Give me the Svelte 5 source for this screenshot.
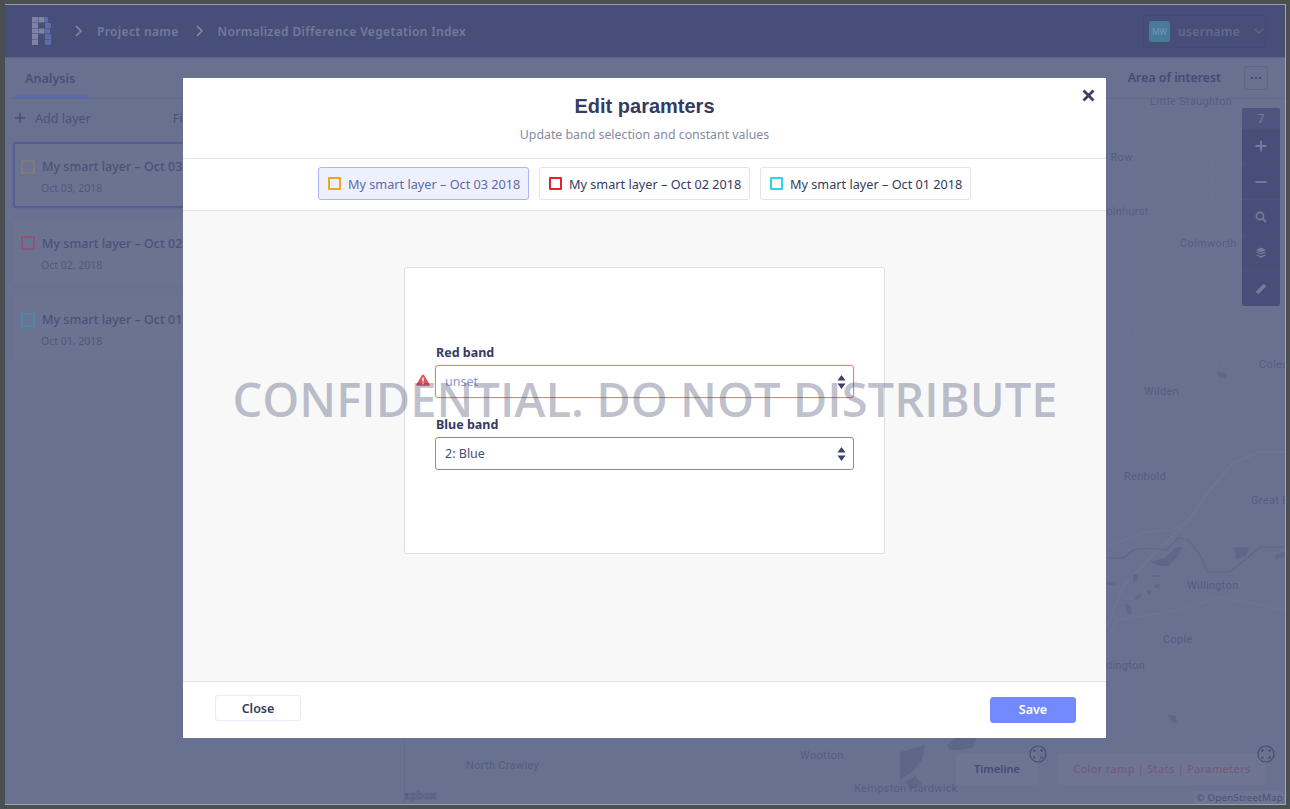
<script>
	const layers = [
		{ name: 'My smart layer – Oct 03 2018', short: 'My smart layer – Oct 03', date: 'Oct 03, 2018', color: '#e9a820', dim: '#7f7a7c', active: true },
		{ name: 'My smart layer – Oct 02 2018', short: 'My smart layer – Oct 02', date: 'Oct 02, 2018', color: '#e8202c', dim: '#8f5378' },
		{ name: 'My smart layer – Oct 01 2018', short: 'My smart layer – Oct 01', date: 'Oct 01, 2018', color: '#2fd3ea', dim: '#4f86ab' }
	];

	const places = [
		['Little Staughton', 1150, 95], ['ne Row', 1095, 151], ['Bolnhurst', 1099, 205], ['Colmworth', 1180, 237],
		['Coles', 1259, 358], ['Wilden', 1144, 385], ['Renhold', 1124, 470], ['Great B', 1251, 494],
		['Willington', 1187, 579], ['Cople', 1163, 633], ['dington', 1106, 659], ['North Crawley', 466, 759],
		['Wootton', 800, 749], ['Kempston Hardwick', 854, 782]
	];

	const water = [
		'1150,562 1165,558 1175,548 1182,547 1178,556 1168,566 1160,566',
		'1234,547 1250,547 1246,556 1236,559',
		'1125,603 1131,606 1132,614 1127,614',
		'1133,574 1138,574 1137,581 1133,581',
		'1107,582 1116,582 1114,585 1107,585',
		'1147,590 1152,591 1150,595 1147,593',
		'1154,585 1160,584 1159,589 1155,587',
		'1152,575 1160,575 1159,577 1152,577',
		'1135,597 1142,593 1140,598 1136,601',
		'1275,555 1285,552 1285,557 1276,559',
		'1217,372 1226,373 1227,378 1218,377',
		'1167,714 1176,716 1177,723 1172,722',
		'900,752 915,748 925,745 922,760 912,772 900,780',
		'947,745 955,738 977,738 972,748 960,750 950,750',
		'905,782 915,776 922,784 910,790'
	];
</script>

<div class="frame">
	<div class="window">
		<header class="topbar">
			<svg class="logo" width="20" height="28" viewBox="0 0 20 28">
				<g fill="#7d84a3">
					<rect x="0" y="0" width="6" height="5.5" /><rect x="6.5" y="0" width="6" height="5.5" />
					<rect x="0" y="6" width="6" height="5" /><rect x="0" y="11.5" width="6" height="5" />
					<rect x="6.5" y="11.5" width="6" height="5" /><rect x="0" y="17" width="6" height="5" />
					<rect x="0" y="22.5" width="6" height="5.5" />
				</g>
				<g fill="#5d6ca8">
					<rect x="13" y="0" width="3" height="5.5" /><path d="M13 6h6v5h-6z" />
					<path d="M13 11.5h5v5h-5z" /><rect x="13" y="17" width="6" height="5" /><rect x="13" y="22.5" width="6" height="5.5" />
				</g>
			</svg>
			<svg class="chev" width="10" height="14" viewBox="0 0 10 14"><path d="M2 2l5 5-5 5" /></svg>
			<span class="crumb">Project name</span>
			<svg class="chev" width="10" height="14" viewBox="0 0 10 14"><path d="M2 2l5 5-5 5" /></svg>
			<span class="crumb">Normalized Difference Vegetation Index</span>
			<div class="user">
				<span class="avatar">MW</span>
				<span class="uname">username</span>
				<svg width="10" height="7" viewBox="0 0 10 7"><path d="M1 1l4 4 4-4" fill="none" stroke="#5f6789" stroke-width="1.4" /></svg>
			</div>
		</header>

		<div class="main">
			<aside class="side">
				<div class="tabs"><span class="tab">Analysis</span></div>
				<div class="add">
					<svg class="plus" width="10" height="10" viewBox="0 0 10 10"><path d="M5 0v10M0 5h10" stroke="#484f79" stroke-width="1.5" /></svg>
					<span>Add layer</span><span class="fi">Fi</span>
				</div>
				{#each layers as l}
					<div class="layer" class:active={l.active}>
						<div class="layer-title">
							<span class="box" style="border-color: {l.dim}"></span>
							<span>{l.short}</span>
						</div>
						<div class="layer-date">{l.date}</div>
					</div>
				{/each}
			</aside>

			<section class="map">
				<div class="mapbar">
					<span class="aoi">Area of interest</span>
					<span class="dots">
						<svg width="12" height="4" viewBox="0 0 12 4"><circle cx="2" cy="2" r="1.2" /><circle cx="6" cy="2" r="1.2" /><circle cx="10" cy="2" r="1.2" /></svg>
					</span>
				</div>
				<div class="tools">
					<div class="zoomval">7</div>
					<div class="tool">
						<svg width="14" height="14" viewBox="0 0 14 14"><path d="M7 1.5v11M1.5 7h11" stroke="#757d9c" stroke-width="1.8" /></svg>
					</div>
					<div class="tool">
						<svg width="14" height="14" viewBox="0 0 14 14"><path d="M1.5 7h11" stroke="#757d9c" stroke-width="1.8" /></svg>
					</div>
					<div class="tool">
						<svg width="12" height="12" viewBox="0 0 12 12"><circle cx="5" cy="5" r="3.6" fill="none" stroke="#757d9c" stroke-width="1.6" /><path d="M7.6 7.6L11 11" stroke="#757d9c" stroke-width="1.8" /></svg>
					</div>
					<div class="tool">
						<svg width="12" height="12" viewBox="0 0 12 12" fill="#757d9c"><path d="M6 .5l5 2.4-5 2.4-5-2.4zM1 5.2l1.2-.6L6 6.4l3.8-1.8 1.2.6-5 2.4zM1 8l1.2-.6L6 9.2l3.8-1.8L11 8l-5 2.9z" /></svg>
					</div>
					<div class="tool">
						<svg width="12" height="12" viewBox="0 0 12 12" fill="#757d9c"><path d="M8.8.8l2.4 2.4-8 8-2.4-2.4z" /></svg>
					</div>
				</div>
				<div class="bottom-btns">
					<div class="pill timeline">Timeline
						<svg class="expand" width="18" height="18" viewBox="0 0 18 18" fill="none" stroke="#454c76"><circle cx="9" cy="9" r="8" stroke-width="1.2" /><path d="M5 7V5h2M11 5h2v2M13 11v2h-2M7 13H5v-2" stroke-width="1.2" /></svg>
					</div>
					<div class="pill ramp">Color ramp | Stats | Parameters
						<svg class="expand" width="18" height="18" viewBox="0 0 18 18" fill="none" stroke="#454c76"><circle cx="9" cy="9" r="8" stroke-width="1.2" /><path d="M5 7V5h2M11 5h2v2M13 11v2h-2M7 13H5v-2" stroke-width="1.2" /></svg>
					</div>
				</div>
				<span class="mapbox">mapbox</span>
				<span class="osm">© OpenStreetMap</span>
			</section>
		</div>

		<svg class="roads" width="1280" height="799" viewBox="5 5 1280 799" fill="none">
			<path d="M1107 627L1123 587 1150 558 1187 522 1210 490 1233 463 1260 452 1285 452" stroke="#6d7593" stroke-width="2" stroke-linejoin="round" />
			<path d="M1107 547L1143 532 1173 530 1187 522" stroke="#6d7593" stroke-width="1.5" />
			<path d="M1107 637L1117 620 1180 610 1220 597 1250 603 1285 610" stroke="#6d7593" stroke-width="1.5" />
			<path d="M1107 558L1123 558 1133 550 1150 548 1167 550 1178 538 1188 540 1200 555 1207 572 1230 572 1247 558 1260 547 1285 547" stroke="#5f6789" stroke-width="1.2" />
			<path d="M1150 112L1180 100M1200 108C1220 160 1215 230 1190 290M1130 200C1140 250 1130 300 1128 340" stroke="#6c7492" stroke-width="1" />
			<path d="M1215 345L1218 380 1180 385 1170 410M1107 470L1170 500 1185 540" stroke="#6c7492" stroke-width="1" />
			<path d="M980 740L1000 790M1020 745L1070 800" stroke="#6c7492" stroke-width="1" />
			{#each water as w}
				<polygon points={w} fill="#5f6789" />
			{/each}
		</svg>

		{#each places as p}
			<span class="place" style="left: {p[1] - 5}px; top: {p[2] - 5}px">{p[0]}</span>
		{/each}
	</div>

	<div class="modal">
		<button class="x" aria-label="Close">
			<svg width="13" height="13" viewBox="0 0 13 13"><path d="M1.5 1.5l10 10M11.5 1.5l-10 10" stroke="#3a4068" stroke-width="2.8" /></svg>
		</button>
		<div class="modal-head">
			<h2>Edit paramters</h2>
			<p>Update band selection and constant values</p>
		</div>
		<div class="modal-tabs">
			{#each layers as l}
				<div class="mtab" class:on={l.active}>
					<span class="mbox" style="border-color: {l.color}"></span>
					<span>{l.name}</span>
				</div>
			{/each}
		</div>
		<div class="modal-body">
			<div class="card">
				<div class="field">
					<div class="label">Red band</div>
					<div class="dropdown bad">
						<svg class="warn" width="14" height="12" viewBox="0 0 14 12">
							<path d="M7 .5c.5 0 .8.3 1 .6l5.6 9.2c.4.7 0 1.4-.8 1.4H1.200c-.8 0-1.200-.7-.8-1.400L6 1.100c.2-.3.5-.6 1-.6z" fill="#e0555c" />
							<path d="M7 3.500v4M7 8.800v1.400" stroke="#fff" stroke-width="1.500" />
						</svg>
						<span class="unset">unset</span>
						<svg class="updown" width="9" height="14" viewBox="0 0 9 14"><path d="M4.500 0l4 5.500h-8zM4.500 14l-4-5.500h8z" /></svg>
					</div>
				</div>
				<div class="field">
					<div class="label">Blue band</div>
					<div class="dropdown">
						<span>2: Blue</span>
						<svg class="updown" width="9" height="14" viewBox="0 0 9 14"><path d="M4.500 0l4 5.500h-8zM4.500 14l-4-5.500h8z" /></svg>
					</div>
				</div>
			</div>
		</div>
		<div class="modal-foot">
			<button class="btn close">Close</button>
			<button class="btn save">Save</button>
		</div>
	</div>

	<div class="watermark">CONFIDENTIAL. DO NOT DISTRIBUTE</div>
</div>

<style>
	:global(body) {
		margin: 0;
		background: #4b4f51;
		font-family: 'Noto Sans', 'Open Sans', sans-serif;
	}

	.frame {
		position: relative;
		width: 1290px;
		height: 809px;
		padding: 4px 4px 4px 5px;
		box-sizing: border-box;
		overflow: hidden;
	}

	.window {
		position: relative;
		height: 100%;
		display: flex;
		flex-direction: column;
		background: #697190;
		border-top: 1px solid #9a9da8;
		border-bottom: 1px solid #a4a6a8;
		border-right: 1px solid #a4a6a8;
		box-sizing: border-box;
		overflow: hidden;
	}

	.topbar {
		height: 52px;
		flex: none;
		display: flex;
		align-items: center;
		background: #474f79;
		padding-left: 27px;
		color: #727a9b;
		border-bottom: 1px solid #5a628a;
		box-sizing: content-box;
	}

	.logo {
		margin-right: 22px;
		margin-top: -1px;
	}

	.chev {
		margin-right: 13px;
	}

	.chev path {
		fill: none;
		stroke: #8087a5;
		stroke-width: 1.6;
	}

	.crumb {
		font-size: 12px;
		font-weight: 600;
		margin-right: 16px;
		letter-spacing: 0.35px;
	}

	.user {
		margin-left: auto;
		margin-right: 19px;
		width: 123px;
		height: 33px;
		box-sizing: border-box;
		display: flex;
		align-items: center;
		gap: 8px;
		padding-left: 5px;
		border: 1px solid #434a74;
		color: #626a8e;
		font-size: 12px;
		font-weight: 600;
		letter-spacing: 0.4px;
	}

	.uname {
		width: 68px;
	}

	.avatar {
		width: 21px;
		height: 21px;
		border-radius: 3px;
		background: #4a7a9b;
		color: #6f9bb4;
		font-size: 8px;
		font-weight: 400;
		letter-spacing: 0;
		display: flex;
		align-items: center;
		justify-content: center;
	}

	.main {
		flex: 1;
		display: flex;
		min-height: 0;
	}

	.side {
		width: 400px;
		flex: none;
		color: #484f79;
		border-right: 1px solid #636b8b;
		box-sizing: border-box;
	}

	.tabs {
		height: 41px;
		margin-right: -1px;
		background: #697190;
		border-bottom: 1px solid #636b8b;
		box-sizing: border-box;
		padding-left: 8px;
	}

	.tab {
		display: inline-block;
		width: 76px;
		height: 40px;
		box-sizing: border-box;
		padding: 12px 0 0 12px;
		font-size: 12.6px;
		font-weight: 600;
		border-bottom: 3px solid #5a6cab;
	}

	.add {
		display: flex;
		align-items: center;
		height: 38px;
		font-size: 12.6px;
		padding-left: 10px;
		margin-bottom: 5px;
		color: #4b527b;
	}

	.plus {
		margin-right: 10px;
	}

	.fi {
		margin-left: 82px;
	}

	.layer {
		height: 66px;
		margin: 0 0 10.5px 8px;
		width: 392px;
		padding: 16px 0 0 9px;
		box-sizing: border-box;
		background: #6b7391;
		border-radius: 3px;
		box-shadow: 0 0 1px #656d8d;
	}

	.layer.active {
		border: 2px solid #575f92;
		padding: 14px 0 0 7px;
		box-shadow: 0 0 2px #596194;
	}

	.layer-title {
		display: flex;
		align-items: center;
		gap: 7px;
		margin-left: -1px;
		font-size: 12.5px;
		font-weight: 500;
		color: #4a517b;
		white-space: nowrap;
	}

	.box {
		width: 10px;
		height: 10px;
		border: 2px solid;
		border-radius: 1px;
		flex: none;
	}

	.layer-date {
		font-size: 10.5px;
		color: #50587f;
		margin: 6px 0 0 19px;
	}

	.map {
		position: relative;
		flex: 1;
		overflow: hidden;
	}

	.mapbar {
		height: 41px;
		display: flex;
		align-items: center;
		justify-content: flex-end;
		border-bottom: 1px solid #636b8b;
		box-sizing: border-box;
		padding: 0 17px 1px 0;
		gap: 23px;
		color: #444b76;
		font-size: 12.3px;
		font-weight: 600;
	}

	.dots {
		width: 22px;
		height: 22px;
		border: 1px solid #5d6589;
		border-radius: 3px;
		display: flex;
		align-items: center;
		justify-content: center;
		fill: #444b76;
	}

	.tools {
		position: absolute;
		top: 50px;
		right: 5px;
		width: 38px;
		background: #474f79;
		border-radius: 3px;
		z-index: 2;
	}

	.zoomval {
		height: 20px;
		line-height: 20px;
		text-align: center;
		color: #757d9c;
		font-size: 13px;
		background: #4e5680;
		border-radius: 3px 3px 0 0;
	}

	.tool {
		height: 35.6px;
		display: flex;
		align-items: center;
		justify-content: center;
		border-top: 1px solid #4b5379;
		box-sizing: border-box;
	}

	.bottom-btns {
		position: absolute;
		right: 19px;
		bottom: 19px;
		display: flex;
		gap: 20px;
		z-index: 2;
		font-size: 11px;
		font-weight: 600;
	}

	.pill {
		position: relative;
		height: 32px;
		line-height: 32px;
		text-align: center;
		background: #6d7593;
		border-radius: 3px;
	}

	.timeline {
		width: 82px;
		color: #444b76;
	}

	.ramp {
		width: 208px;
		color: #775a7e;
		letter-spacing: 0.25px;
		font-weight: 500;
	}

	.expand {
		position: absolute;
		top: -8px;
		right: -9px;
	}

	.mapbox {
		position: absolute;
		left: -11px;
		bottom: 3px;
		font: 700 11px 'Liberation Sans', sans-serif;
		color: #6f7795;
		-webkit-text-stroke: 0.6px #4f577e;
	}

	.osm {
		position: absolute;
		right: 2px;
		bottom: 0;
		font-size: 9.8px;
		color: #4a517a;
		letter-spacing: 0.2px;
		background: #6d7593;
		padding-left: 2px;
	}

	.roads {
		position: absolute;
		left: 0;
		top: 0;
		pointer-events: none;
	}

	.place {
		position: absolute;
		font: 11px Roboto, sans-serif;
		color: #555d83;
		letter-spacing: 0.3px;
		white-space: nowrap;
	}

	.modal {
		position: absolute;
		left: 183px;
		top: 78px;
		width: 923px;
		height: 660px;
		background: #fff;
		display: flex;
		flex-direction: column;
		z-index: 5;
	}

	.x {
		position: absolute;
		top: 11px;
		right: 11px;
		width: 13px;
		height: 13px;
		padding: 0;
		border: 0;
		background: none;
		line-height: 0;
	}

	.modal-head {
		height: 80px;
		flex: none;
		text-align: center;
		box-sizing: border-box;
		padding-top: 16px;
	}

	h2 {
		margin: 0;
		font: 700 20px/24px 'Liberation Sans', sans-serif;
		color: #353b62;
	}

	.modal-head p {
		margin: 8px 0 0;
		font-size: 12.35px;
		line-height: 18px;
		color: #868ba0;
	}

	.modal-tabs {
		height: 53px;
		flex: none;
		display: flex;
		align-items: center;
		justify-content: center;
		gap: 10px;
		box-sizing: border-box;
		padding-bottom: 2px;
		border-top: 1px solid #e4e4e6;
		border-bottom: 1px solid #e4e4e6;
	}

	.mtab {
		width: 211px;
		height: 33px;
		box-sizing: border-box;
		display: flex;
		align-items: center;
		gap: 7px;
		padding-left: 9px;
		border: 1px solid #e2e3e8;
		border-radius: 3px;
		font-size: 12.7px;
		color: #353b62;
		white-space: nowrap;
	}

	.mtab.on {
		background: #eef0fd;
		border-color: #a9b6fb;
		color: #5d69a8;
	}

	.mbox {
		width: 9px;
		height: 9px;
		border: 2px solid;
		border-radius: 1px;
		flex: none;
	}

	.modal-body {
		flex: 1;
		background: #f8f8f8;
		display: flex;
		justify-content: center;
		padding-top: 56px;
	}

	.card {
		width: 481px;
		height: 287px;
		box-sizing: border-box;
		background: #fff;
		border: 1px solid #dedfe3;
		border-radius: 3px;
		padding: 76px 30px 0;
	}

	.field {
		margin-bottom: 18px;
	}

	.label {
		font-size: 12.5px;
		font-weight: 700;
		color: #353b62;
		line-height: 17px;
		margin-bottom: 4px;
		padding-left: 1px;
	}

	.dropdown {
		position: relative;
		height: 33px;
		box-sizing: border-box;
		border-width: 1px;
		border-style: solid;
		border-color: #7f89c9;
		border-radius: 3px;
		display: flex;
		align-items: center;
		padding-left: 9px;
		font-size: 12.5px;
		color: #484e70;
	}

	.dropdown.bad {
		border-color: #e57f84;
		box-shadow: 0 0 0 1px rgba(229, 127, 132, 0.12);
	}

	.unset {
		color: #8f96cf;
	}

	.updown {
		position: absolute;
		right: 7px;
		top: 9px;
		fill: #3a4068;
	}

	.warn {
		position: absolute;
		left: -20px;
		top: 8px;
	}

	.modal-foot {
		height: 56px;
		flex: none;
		display: flex;
		align-items: center;
		justify-content: space-between;
		padding: 0 30px 0 32px;
		border-top: 1px solid #e4e4e6;
	}

	.btn {
		width: 86px;
		height: 26px;
		box-sizing: border-box;
		border: 1px solid #e6eafc;
		border-radius: 3px;
		background: #fff;
		font: 600 12.5px 'Noto Sans', sans-serif;
		color: #353b62;
	}

	.btn.close {
		margin-bottom: 4px;
	}

	.btn.save {
		background: #738aff;
		border-color: #738aff;
		color: #fff;
		padding-bottom: 3px;
	}

	.watermark {
		position: absolute;
		left: 0;
		right: 0;
		top: 369px;
		text-align: center;
		z-index: 6;
		font-size: 47.1px;
		line-height: 60px;
		font-weight: 600;
		color: rgba(53, 59, 98, 0.33);
		white-space: nowrap;
		font-family: 'Open Sans', sans-serif;
	}
</style>
